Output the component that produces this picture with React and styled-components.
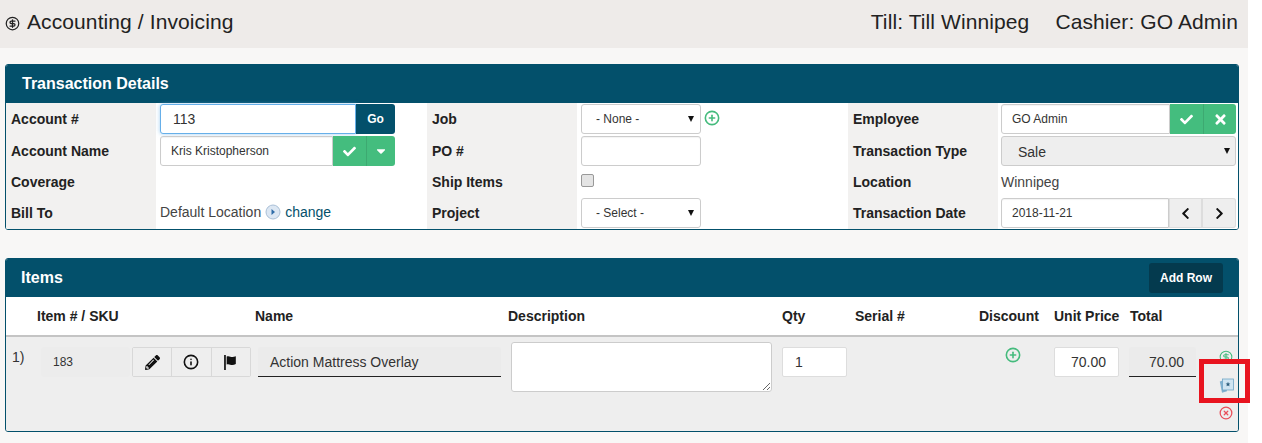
import React from "react";
import styled, { createGlobalStyle } from "styled-components";
import { FaCheck, FaTimes, FaCaretDown, FaPencilAlt, FaChevronLeft, FaChevronRight } from "react-icons/fa";
import { CircleDollarSign, CirclePlus, CircleX, Info } from "lucide-react";

const GlobalStyle = createGlobalStyle`
  html, body { margin: 0; padding: 0; background: #fff; overflow: hidden; }
  body, input, select, textarea, button { font-family: "Liberation Sans", Arial, sans-serif; }
  * { box-sizing: border-box; }
`;

const Page = styled.div`
  position: relative;
  width: 1248px;
  height: 443px;
  background: #f8f7f6;
`;

const TopBar = styled.header`
  height: 48px;
  background: #eeebe9;
  display: flex;
  align-items: center;
  justify-content: space-between;
  padding: 0 10px 4px 5px;
  font-size: 21px;
  letter-spacing: 0.1px;
  color: #222;
`;

const Title = styled.div`
  display: flex;
  align-items: center;
  gap: 7px;
  svg { margin-top: 3px; }
`;

const TillInfo = styled.div`
  display: flex;
  gap: 26px;
`;

const Content = styled.main`
  padding: 16px 9px 0 5px;
  display: flex;
  flex-direction: column;
  gap: 28px;
`;

const Panel = styled.section`
  border: 1px solid #03506b;
  border-radius: 3px;
  overflow: hidden;
`;

const PanelHeader = styled.div`
  height: 38px;
  background: #03506b;
  color: #fff;
  font-size: 16px;
  font-weight: bold;
  display: flex;
  align-items: center;
  justify-content: space-between;
  padding: 0 15px 0 ${(p) => p.$inset || 16}px;
`;

const AddRow = styled.button`
  height: 30px;
  width: 74px;
  padding: 0;
  border: 0;
  border-radius: 3px;
  background: #043a4e;
  color: #fff;
  font-size: 12px;
  font-weight: bold;
`;

const DetailsGrid = styled.div`
  display: grid;
  grid-template-columns: 150px 271px 150px 271px 150px 240px;
  grid-template-rows: 32px 32px 30px 32px;
  background: #fff;
`;

const Label = styled.div`
  background: #f2f1f0;
  color: #222;
  font-size: 14px;
  font-weight: bold;
  display: flex;
  align-items: center;
  padding-left: 5px;
`;

const Cell = styled.div`
  display: flex;
  align-items: center;
  padding: 0 0 ${(p) => p.$lift || 0}px ${(p) => p.$pad ?? 4}px;
  font-size: 14px;
  color: #444;
`;

const TextInput = styled.input`
  width: ${(p) => p.$w}px;
  height: 30px;
  flex: none;
  background: #fff;
  border: 1px solid ${(p) => (p.$focus ? "#66afe9" : "#ccc")};
  border-radius: ${(p) => (p.$joined ? "3px 0 0 3px" : "3px")};
  box-shadow: ${(p) => (p.$focus ? "0 0 4px rgba(102,175,233,.6)" : "inset 0 1px 1px rgba(0,0,0,.05)")};
  padding: 0 0 0 ${(p) => p.$indent || 10}px;
  font-size: ${(p) => p.$size || 12}px;
  color: #333;
  outline: none;
`;

const JoinBtn = styled.button`
  width: ${(p) => p.$w || 33}px;
  height: 30px;
  flex: none;
  padding: 0;
  border: 0;
  border-left: ${(p) => (p.$split ? "1px solid rgba(0,0,0,.1)" : "0")};
  background: ${(p) => (p.$tone === "navy" ? "#03506b" : p.$tone === "grey" ? "#eee" : "#44bd7e")};
  color: ${(p) => (p.$tone === "grey" ? "#111" : "#fff")};
  font-size: 12px;
  font-weight: bold;
  display: flex;
  align-items: center;
  justify-content: center;
  box-shadow: ${(p) => (p.$tone === "grey" ? "inset 0 0 0 1px #ddd" : "none")};
  &:last-child { border-radius: 0 3px 3px 0; }
`;

const SelectWrap = styled.div`
  position: relative;
  width: ${(p) => p.$w}px;
  height: 30px;
  flex: none;
  &::after {
    content: "";
    position: absolute;
    right: ${(p) => p.$arrow || 7}px;
    top: 12px;
    border-left: 3.5px solid transparent;
    border-right: 3.5px solid transparent;
    border-top: 6px solid #111;
  }
`;

const Select = styled.select`
  appearance: none;
  width: 100%;
  height: 100%;
  background: ${(p) => (p.$muted ? "#eee" : "#fff")};
  border: 1px solid #ccc;
  border-radius: 3px;
  padding: ${(p) => (p.$muted ? "2px" : "0")} 0 0 ${(p) => p.$indent || 14}px;
  font-size: ${(p) => p.$size || 12}px;
  color: #333;
`;

const Checkbox = styled.input`
  appearance: none;
  margin: 0 0 3px;
  width: 13px;
  height: 13px;
  background: #e4e4e4;
  border: 1px solid #999;
  border-radius: 2px;
`;

const Link = styled.a`
  color: #03506b;
`;

const GreenPlus = styled(CirclePlus)`
  color: #45bb7d;
  flex: none;
`;

const ItemsHead = styled.div`
  height: 38px;
  background: #fff;
  display: grid;
  grid-template-columns: 218px 253px 274px 73px 124px 75px 76px 1fr;
  align-items: center;
  padding-left: 31px;
  font-size: 14px;
  font-weight: bold;
  color: #222;
`;

const ItemRow = styled.div`
  height: 96px;
  background: #eee;
  border-top: 2px solid #c4c4c4;
  display: flex;
  align-items: flex-start;
  padding-top: 5px;
  font-size: 14px;
  color: #333;
`;

const RowNo = styled.div`
  width: 35px;
  padding: 7px 0 0 6px;
`;

const Sku = styled.div`
  width: 89px;
  height: 30px;
  margin-top: 5px;
  background: #ececec;
  border-radius: 2px;
  font-size: 12px;
  display: flex;
  align-items: center;
  padding-left: 12px;
`;

const ButtonGroup = styled.div`
  display: flex;
  width: 119px;
  height: 30px;
  margin: 5px 7px 0 2px;
  border: 1px solid #d8d8d8;
  border-radius: 2px;
`;

const ToolBtn = styled.button`
  flex: 1;
  padding: 0;
  border: 0;
  border-left: ${(p) => (p.$first ? "0" : "1px solid #d8d8d8")};
  background: #eee;
  color: #111;
  display: flex;
  align-items: center;
  justify-content: center;
`;

const LockedField = styled.div`
  width: ${(p) => p.$w}px;
  height: 30px;
  margin: 5px ${(p) => p.$after || 0}px 0 ${(p) => p.$before || 0}px;
  background: #ebebeb;
  border-bottom: 1px solid #222;
  border-radius: 3px 3px 0 0;
  display: flex;
  align-items: center;
  justify-content: ${(p) => (p.$right ? "flex-end" : "flex-start")};
  padding: 0 ${(p) => (p.$right ? 12 : 0)}px 0 ${(p) => (p.$right ? 0 : 12)}px;
`;

const Notes = styled.textarea`
  width: 261px;
  height: 50px;
  margin-right: 10px;
  background: #fff;
  border: 1px solid #ccc;
  border-radius: 3px;
  display: block;
`;

const NumberInput = styled.input`
  width: 65px;
  height: 30px;
  margin-top: 5px;
  background: #fff;
  border: 1px solid #ddd;
  border-radius: 2px;
  padding: 0 ${(p) => (p.$right ? 12 : 0)}px 0 ${(p) => (p.$right ? 0 : 12)}px;
  text-align: ${(p) => (p.$right ? "right" : "left")};
  font-size: 14px;
  color: #333;
`;

const DiscountCol = styled.div`
  width: 207px;
  padding: 5px 0 0 158px;
`;

const RowActions = styled.div`
  width: 42px;
  margin-top: 8px;
  padding-left: 23px;
  display: flex;
  flex-direction: column;
  gap: 13.5px;
  svg { display: block; }
`;

const Highlight = styled.div`
  position: absolute;
  left: 1199px;
  top: 359px;
  width: 51px;
  height: 44px;
  border: 5px solid #e8141f;
`;

function PlayDot() {
  return (
    <svg width="16" height="16" viewBox="0 0 16 16" style={{ margin: "0 4px" }}>
      <circle cx="8" cy="8" r="7" fill="#dce7f3" stroke="#a9bfd6" />
      <path d="M6.5 5l3.5 3-3.5 3z" fill="#2f6da8" />
    </svg>
  );
}

function FlagIcon() {
  return (
    <svg width="17" height="17" viewBox="0 0 16 16">
      <path d="M2 1h1.6v14H2z" fill="#111" />
      <path d="M4.4 2.400c2-1 3.600.4 5.400.4 1 0 2-.3 3.200-.8v7.400c-1.200.6-2.200.9-3.300.9-1.900 0-3.300-1.300-5.300-.5z" fill="#111" />
    </svg>
  );
}

function CardsIcon() {
  return (
    <svg width="15" height="15" viewBox="0 0 15 15">
      <path d="M.8 3.500 6 1.800l2 11.500-5 1.500z" fill="#7fb0cf" />
      <rect x="3.500" y="1" width="11" height="11" fill="#cfe4f1" stroke="#6fa5c6" strokeWidth=".8" />
      <path d="M9 3.800l.7 1.600 1.700.1-1.300 1.100.4 1.700L9 7.400l-1.500.9.400-1.700-1.300-1.100 1.700-.1z" fill="#2c5d7c" />
    </svg>
  );
}

export default function App() {
  return (
    <Page>
      <GlobalStyle />
      <TopBar>
        <Title>
          <CircleDollarSign size={15} strokeWidth={2} />
          Accounting / Invoicing
        </Title>
        <TillInfo>
          <span>Till: Till Winnipeg</span>
          <span>Cashier: GO Admin</span>
        </TillInfo>
      </TopBar>
      <Content>
        <Panel>
          <PanelHeader>Transaction Details</PanelHeader>
          <DetailsGrid>
            <Label>Account #</Label>
            <Cell>
              <TextInput $w={196} $focus $joined $size={14} $indent={12} defaultValue="113" />
              <JoinBtn $w={39} $tone="navy">Go</JoinBtn>
            </Cell>
            <Label>Job</Label>
            <Cell>
              <SelectWrap $w={120}>
                <Select><option>- None -</option></Select>
              </SelectWrap>
              <GreenPlus size={16} strokeWidth={2.4} style={{ margin: "0 0 3px 3px" }} />
            </Cell>
            <Label>Employee</Label>
            <Cell $pad={3}>
              <TextInput $w={169} $joined defaultValue="GO Admin" />
              <JoinBtn><FaCheck size={13} /></JoinBtn>
              <JoinBtn $split><FaTimes size={15} /></JoinBtn>
            </Cell>

            <Label>Account Name</Label>
            <Cell>
              <TextInput $w={173} $joined defaultValue="Kris Kristopherson" />
              <JoinBtn><FaCheck size={13} /></JoinBtn>
              <JoinBtn $w={29} $split><FaCaretDown size={14} /></JoinBtn>
            </Cell>
            <Label>PO #</Label>
            <Cell><TextInput $w={120} /></Cell>
            <Label>Transaction Type</Label>
            <Cell $pad={3}>
              <SelectWrap $w={235} $arrow={6}>
                <Select $muted $indent={16} $size={14}><option>Sale</option></Select>
              </SelectWrap>
            </Cell>

            <Label>Coverage</Label>
            <Cell />
            <Label>Ship Items</Label>
            <Cell><Checkbox type="checkbox" /></Cell>
            <Label>Location</Label>
            <Cell $pad={3}>Winnipeg</Cell>

            <Label>Bill To</Label>
            <Cell $lift={2}>
              Default Location <PlayDot /> <Link>change</Link>
            </Cell>
            <Label>Project</Label>
            <Cell>
              <SelectWrap $w={120}>
                <Select><option>- Select -</option></Select>
              </SelectWrap>
            </Cell>
            <Label>Transaction Date</Label>
            <Cell $pad={3}>
              <TextInput $w={168} $joined defaultValue="2018-11-21" />
              <JoinBtn $tone="grey"><FaChevronLeft size={13} /></JoinBtn>
              <JoinBtn $tone="grey" $w={34}><FaChevronRight size={13} /></JoinBtn>
            </Cell>
          </DetailsGrid>
        </Panel>

        <Panel>
          <PanelHeader $inset={15}>
            Items
            <AddRow>Add Row</AddRow>
          </PanelHeader>
          <ItemsHead>
            <span>Item # / SKU</span>
            <span>Name</span>
            <span>Description</span>
            <span>Qty</span>
            <span>Serial #</span>
            <span>Discount</span>
            <span>Unit Price</span>
            <span>Total</span>
          </ItemsHead>
          <ItemRow>
            <RowNo>1)</RowNo>
            <Sku>183</Sku>
            <ButtonGroup>
              <ToolBtn $first><FaPencilAlt size={15} /></ToolBtn>
              <ToolBtn><Info size={16} strokeWidth={2.4} /></ToolBtn>
              <ToolBtn><FlagIcon /></ToolBtn>
            </ButtonGroup>
            <LockedField $w={243} $after={10}>Action Mattress Overlay</LockedField>
            <Notes />
            <NumberInput defaultValue="1" />
            <DiscountCol>
              <GreenPlus size={16} strokeWidth={2.4} />
            </DiscountCol>
            <NumberInput $right defaultValue="70.00" />
            <LockedField $w={67} $before={10} $right>70.00</LockedField>
            <RowActions>
              <CircleDollarSign size={14} color="#45bb7d" strokeWidth={1.8} />
              <CardsIcon />
              <CircleX size={14} color="#e8505b" strokeWidth={2.2} />
            </RowActions>
          </ItemRow>
        </Panel>
      </Content>
      <Highlight />
    </Page>
  );
}
